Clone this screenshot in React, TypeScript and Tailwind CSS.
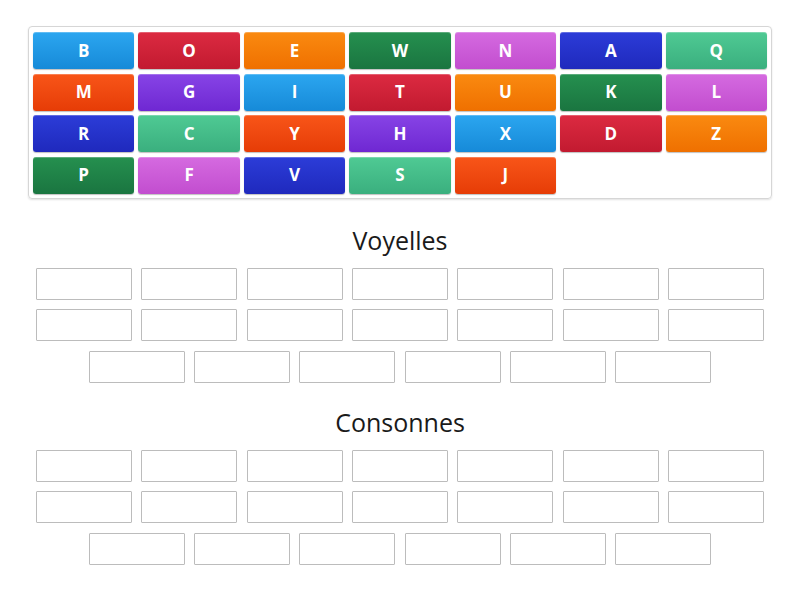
const palette: Record<string, string> = {
  blue: 'from-[#2ba6f0] to-[#168ad8]',
  red: 'from-[#dc2a41] to-[#c21a30]',
  orange: 'from-[#fa8a10] to-[#ef7000]',
  dgreen: 'from-[#25904f] to-[#1a7540]',
  pink: 'from-[#d56ae0] to-[#c24dcf]',
  dblue: 'from-[#2c3cd8] to-[#1f29bd]',
  lgreen: 'from-[#4fca94] to-[#3aaf7e]',
  ored: 'from-[#f85518] to-[#e63c06]',
  purple: 'from-[#8743e6] to-[#6f27d2]',
}

const tiles: [string, string][] = [
  ['B', 'blue'], ['O', 'red'], ['E', 'orange'], ['W', 'dgreen'], ['N', 'pink'], ['A', 'dblue'], ['Q', 'lgreen'],
  ['M', 'ored'], ['G', 'purple'], ['I', 'blue'], ['T', 'red'], ['U', 'orange'], ['K', 'dgreen'], ['L', 'pink'],
  ['R', 'dblue'], ['C', 'lgreen'], ['Y', 'ored'], ['H', 'purple'], ['X', 'blue'], ['D', 'red'], ['Z', 'orange'],
  ['P', 'dgreen'], ['F', 'pink'], ['V', 'dblue'], ['S', 'lgreen'], ['J', 'ored'],
]

function Tile({ letter, color }: { letter: string; color: string }) {
  return (
    <div
      className={`h-[37px] rounded-[3px] bg-linear-to-b ${palette[color]} flex items-center justify-center text-white font-bold text-[17px] shadow-[inset_0_1px_0_rgba(255,255,255,0.25),0_1px_1px_rgba(0,0,0,0.25)]`}
    >
      {letter}
    </div>
  )
}

function Slot() {
  return <div className="w-[96px] h-[32px] border border-[#bcbcbc] rounded-[1px] bg-white" />
}

function Group({ title, first }: { title: string; first: boolean }) {
  return (
    <div className={first ? 'mt-[26px]' : 'mt-[24px]'}>
      <div className="text-center text-[25px] leading-[30px] text-[#1a1a1a]">{title}</div>
      <div className="mt-[13px] flex flex-col gap-[9.5px]">
        {[7, 7, 6].map((n, r) => (
          <div key={r} className="flex justify-center gap-[9.3px]">
            {Array.from({ length: n }).map((_, i) => (
              <Slot key={i} />
            ))}
          </div>
        ))}
      </div>
    </div>
  )
}

export default function App() {
  return (
    <div className="w-[800px] h-[600px] bg-white overflow-hidden pt-[26px] font-['Open_Sans',sans-serif]">
      <div className="mx-[28px] border border-[#d6d6d6] rounded-[4px] shadow-[0_1px_2px_rgba(0,0,0,0.12)] px-[4px] pt-[5px] pb-[4px]">
        <div className="grid grid-cols-7 gap-x-[4px] gap-y-[4.5px]">
          {tiles.map(([l, c]) => (
            <Tile key={l} letter={l} color={c} />
          ))}
        </div>
      </div>
      <Group title="Voyelles" first />
      <Group title="Consonnes" first={false} />
    </div>
  )
}
